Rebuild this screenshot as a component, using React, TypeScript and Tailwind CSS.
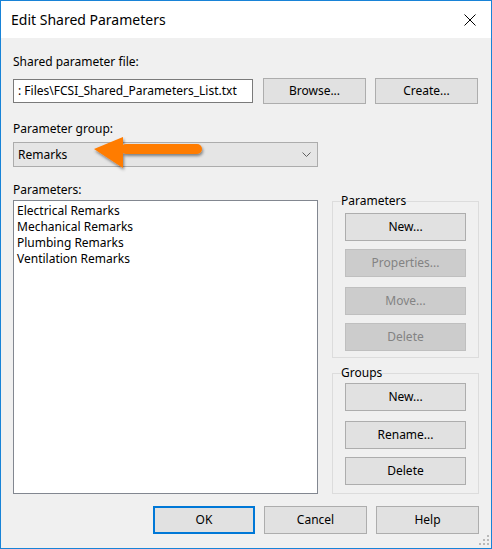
import React from "react";

const font = { fontFamily: '"Noto Sans", "Open Sans", sans-serif' };

const Btn = ({
  children,
  disabled,
  primary,
  className = "",
}: {
  children: React.ReactNode;
  disabled?: boolean;
  primary?: boolean;
  className?: string;
}) => (
  <button
    className={
      "flex items-center justify-center text-[12px] leading-none " +
      (disabled
        ? "bg-[#cccccc] border border-[#bfbfbf] text-[#838383] "
        : primary
          ? "bg-[#e1e1e1] border-2 border-[#0078d7] text-black "
          : "bg-[#e1e1e1] border border-[#adadad] text-black ") +
      className
    }
  >
    {children}
  </button>
);

const GroupBox = ({
  title,
  children,
  className = "",
}: {
  title: string;
  children: React.ReactNode;
  className?: string;
}) => (
  <fieldset
    className={
      "border border-[#dcdcdc] px-[12px] flex flex-col gap-[8px] " + className
    }
  >
    <legend className="-ml-[4px] text-[12px] leading-[14px] text-black">
      {title}
    </legend>
    {children}
  </fieldset>
);

export default function App() {
  const params = [
    "Electrical Remarks",
    "Mechanical Remarks",
    "Plumbing Remarks",
    "Ventilation Remarks",
  ];

  return (
    <div
      className="w-[492px] h-[549px] border border-[#1883d7] bg-[#f0f0f0] flex flex-col text-black"
      style={font}
    >
      {/* title bar */}
      <div className="h-[37px] bg-white flex items-center justify-between pl-[10px] pr-[15px] shrink-0">
        <span className="text-[14px] leading-none">Edit Shared Parameters</span>
        <svg width="12" height="12" viewBox="0 0 12 12">
          <path d="M0.5 0.5 L11.5 11.5 M11.5 0.5 L0.5 11.5" stroke="#000" strokeWidth="1" />
        </svg>
      </div>

      <div className="flex-1 flex flex-col pl-[12px] pr-[12px] relative">
        <div className="mt-[16px] text-[12px] leading-[16px]">Shared parameter file:</div>
        <div className="mt-[8px] flex items-center">
          <div className="w-[240px] h-[24px] border border-[#7a7a7a] bg-white flex items-center pl-[4px] text-[12px] whitespace-nowrap overflow-hidden">
            : Files\FCSI_Shared_Parameters_List.txt
          </div>
          <Btn className="ml-[10px] w-[103px] h-[26px]">Browse...</Btn>
          <Btn className="ml-[9px] w-[103px] h-[26px]">Create...</Btn>
        </div>

        <div className="mt-[17px] text-[12px] leading-[16px]">Parameter group:</div>
        <div className="mt-[5px] w-[305px] h-[25px] border border-[#acacac] bg-[#e5e5e5] flex items-center justify-between pl-[4px] pr-[6px] text-[12px] relative">
          <span>Remarks</span>
          <svg width="9" height="6" viewBox="0 0 9 6">
            <path d="M0.5 0.5 L4.5 4.5 L8.5 0.5" stroke="#606060" strokeWidth="1" fill="none" />
          </svg>
          {/* callout arrow */}
          <svg
            className="absolute left-[78px] top-[-6px]"
            width="116"
            height="36"
            viewBox="0 0 116 36"
          >
            <defs>
              <filter id="sh" x="-20%" y="-30%" width="140%" height="170%">
                <feDropShadow dx="1" dy="2" stdDeviation="1.5" floodColor="#000" floodOpacity="0.45" />
              </filter>
            </defs>
            <g filter="url(#sh)">
              <path d="M2 12 L31 0 L31 7 L31 23 L31 31 Z" fill="#ff7c00" />
              <rect x="29" y="7" width="81" height="10" rx="5" fill="#ff7c00" />
            </g>
          </svg>
        </div>

        <div className="flex mt-[15px]">
          <div className="flex flex-col w-[305px]">
            <div className="text-[12px] leading-[16px]">Parameters:</div>
            <div className="mt-[2px] h-[294px] border border-[#828790] bg-white pt-[2px] pl-[3px] text-[12px] leading-[16px]">
              {params.map((p) => (
                <div key={p}>{p}</div>
              ))}
            </div>
          </div>

          <div className="ml-[14px] flex flex-col w-[146px]">
            <GroupBox title="Parameters" className="mt-[12px] h-[164px]">
              <Btn className="mt-[5px] w-[121px] h-[28px]">New...</Btn>
              <Btn disabled className="w-[121px] h-[28px]">Properties...</Btn>
              <Btn disabled className="mt-[2px] w-[121px] h-[28px]">Move...</Btn>
              <Btn disabled className="w-[121px] h-[28px]">Delete</Btn>
            </GroupBox>
            <GroupBox title="Groups" className="mt-[8px] h-[128px]">
              <Btn className="mt-[3px] w-[121px] h-[28px]">New...</Btn>
              <Btn className="mt-[2px] w-[121px] h-[28px]">Rename...</Btn>
              <Btn className="w-[121px] h-[28px]">Delete</Btn>
            </GroupBox>
          </div>
        </div>

        <div className="mt-[12px] flex justify-end">
          <Btn primary className="w-[102px] h-[28px]">OK</Btn>
          <Btn className="ml-[9px] w-[103px] h-[28px]">Cancel</Btn>
          <Btn className="ml-[9px] w-[103px] h-[28px]">Help</Btn>
        </div>

        {/* size grip */}
        <svg className="absolute right-[1px] bottom-[2px]" width="11" height="11" viewBox="0 0 11 11">
          <g fill="#b9b9b9">
            <rect x="8" y="0" width="2" height="2" />
            <rect x="4" y="4" width="2" height="2" />
            <rect x="8" y="4" width="2" height="2" />
            <rect x="0" y="8" width="2" height="2" />
            <rect x="4" y="8" width="2" height="2" />
            <rect x="8" y="8" width="2" height="2" />
          </g>
        </svg>
      </div>
    </div>
  );
}
